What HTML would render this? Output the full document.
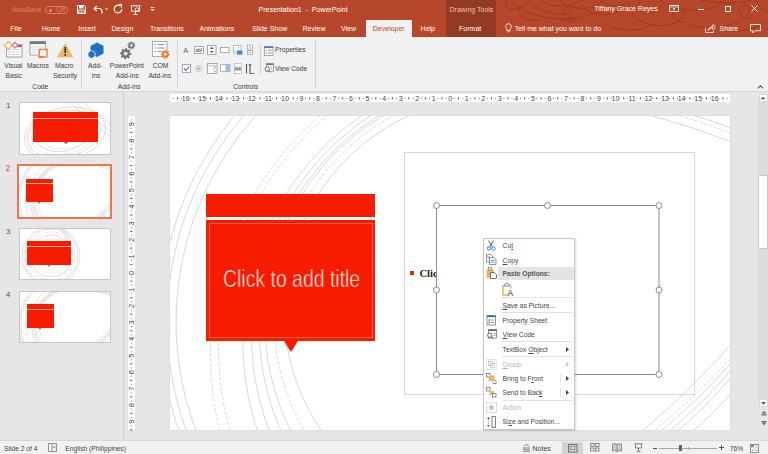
<!DOCTYPE html>
<html><head><meta charset="utf-8">
<style>
*{margin:0;padding:0;box-sizing:border-box}
html,body{width:768px;height:454px;overflow:hidden;background:#e6e6e6;font-family:"Liberation Sans",sans-serif;}
.a{position:absolute;white-space:nowrap}
.t{font-size:7px;line-height:8px;color:#fff}
.rb{font-size:6.7px;line-height:8px;color:#3c3c3c}
#title{left:0;top:0;width:768px;height:37px;background:#b7472a}
#ribbon{left:0;top:37px;width:768px;height:55px;background:#f1f1f1;border-bottom:1px solid #d6d6d6}
.sep{position:absolute;width:1px;background:#d4d4d4}
</style></head><body>
<!-- TITLE BAR -->
<div id="title" class="a">
  <div class="a" style="left:446px;top:0;width:50px;height:37px;background:#933a22"></div>
  <svg class="a" style="left:0;top:0" width="768" height="37" viewBox="0 0 768 37"><g fill="none" stroke="#983820" stroke-width="0.9"><path d="M507 0C503 6 508 11 516 9C526 7 530 2 528 0"/><path d="M512 2C520 12 540 18 562 19C580 20 596 14 606 6"/><path d="M530 0C534 8 548 16 566 14C574 13 572 6 566 8C558 11 566 24 572 22C578 20 572 16 568 18"/><path d="M540 0C548 6 560 8 574 4C580 2 582 0 584 0"/><path d="M560 0C566 8 586 12 600 4"/><path d="M586 10C596 16 612 16 622 10"/><path d="M520 6C516 16 526 22 540 20"/><path d="M632 14C640 24 660 30 676 22C690 15 684 6 676 10C668 14 676 24 686 22"/><path d="M660 0C670 10 700 14 716 6C722 3 722 0 720 0"/><path d="M690 24C704 30 730 28 744 18C754 10 750 2 742 6C734 10 742 20 752 18"/><path d="M700 0C716 4 740 4 752 0"/><path d="M720 30C740 34 760 28 768 20"/><path d="M610 26C620 32 640 32 652 24"/><path d="M600 0C606 6 620 8 630 2"/><path d="M640 0C636 8 644 14 654 12"/><path d="M756 0C760 8 766 12 768 12"/></g></svg>
  <div class="a t" style="left:12px;top:5.9px;color:#e0806a;font-size:6.8px">AutoSave</div>
  <div class="a" style="left:45px;top:6px;width:23px;height:8px;border:1px solid #d9806a;border-radius:4px"></div>
  <div class="a" style="left:48.5px;top:8.5px;width:3px;height:3px;background:#e3937f;border-radius:50%"></div>
  <div class="a t" style="left:56.3px;top:5.9px;color:#e0806a;font-size:6.8px">Off</div>
  <div class="a t" style="left:258.5px;top:5.6px">Presentation1&nbsp;&nbsp;-&nbsp;&nbsp;PowerPoint</div>
  <div class="a t" style="left:449.5px;top:5.9px;color:#eec3b6">Drawing Tools</div>
  <div class="a t" style="left:594.3px;top:4.9px">Tiffany Grace Reyes</div>
  <!-- QAT icons -->
  <svg class="a" style="left:76.5px;top:5px" width="9" height="9" viewBox="0 0 9 9">
    <path d="M0.5 0.5h6.8l1.2 1.2v6.8h-8z" fill="none" stroke="#fff" stroke-width="1"/>
    <rect x="2" y="0.8" width="4.5" height="2.6" fill="#fff"/>
    <rect x="1.8" y="5" width="5.4" height="3.2" fill="none" stroke="#fff" stroke-width="0.9"/>
    <rect x="3.6" y="6.3" width="1.2" height="1.4" fill="#fff"/>
  </svg>
  <svg class="a" style="left:93px;top:5px" width="16" height="9" viewBox="0 0 16 9">
    <path d="M1.5 3.5h4.5a3 3 0 0 1 3 3v2" fill="none" stroke="#fff" stroke-width="1.2"/>
    <path d="M3.8 1L1.2 3.5 3.8 6" fill="none" stroke="#fff" stroke-width="1.2"/>
    <path d="M12 3.5l1.5 1.6 1.5-1.6z" fill="#fff"/>
  </svg>
  <svg class="a" style="left:113px;top:4px" width="10" height="10" viewBox="0 0 10 10">
    <path d="M7.5 2.2A3.8 3.8 0 1 0 8.8 5" fill="none" stroke="#fff" stroke-width="1.2"/>
    <path d="M5.5 0.5h3v3" fill="none" stroke="#fff" stroke-width="1.1"/>
  </svg>
  <svg class="a" style="left:130px;top:5px" width="11" height="10" viewBox="0 0 11 10">
    <path d="M0.5 0.8h10M1.5 0.8v5.5h8v-5.5M5.5 6.3v3.2M3.5 9.5h4" fill="none" stroke="#fff" stroke-width="0.9"/>
    <circle cx="7" cy="4.5" r="1.8" fill="none" stroke="#fff" stroke-width="0.8"/>
  </svg>
  <svg class="a" style="left:150px;top:7px" width="5" height="5" viewBox="0 0 5 5">
    <path d="M0.5 0.5h4" stroke="#fff" stroke-width="0.8"/><path d="M0.5 2l2 2.2 2-2.2z" fill="#fff"/>
  </svg>
  <!-- window controls -->
  <svg class="a" style="left:669px;top:5px" width="10" height="7" viewBox="0 0 10 7">
    <rect x="0.5" y="0.5" width="9" height="6" fill="none" stroke="#fff" stroke-width="0.9"/>
    <path d="M0.5 2h9" stroke="#fff" stroke-width="0.7"/>
    <path d="M5 5.5v-2.3M3.8 4.3l1.2-1.2 1.2 1.2" stroke="#fff" stroke-width="0.8" fill="none"/>
  </svg>
  <div class="a" style="left:697.5px;top:8.5px;width:6px;height:1px;background:#fff"></div>
  <div class="a" style="left:724.5px;top:5.5px;width:6px;height:6px;border:1px solid #fff"></div>
  <svg class="a" style="left:751px;top:5px" width="7" height="7" viewBox="0 0 7 7"><path d="M0.5 0.5l6 6M6.5 0.5l-6 6" stroke="#fff" stroke-width="0.9"/></svg>
  <!-- tell me / share / comments -->
  <svg class="a" style="left:505px;top:23px" width="7" height="10" viewBox="0 0 7 10">
    <path d="M3.5 0.7a2.8 2.8 0 0 0-1.7 5v1.8h3.4v-1.8a2.8 2.8 0 0 0-1.7-5z" fill="none" stroke="#fff" stroke-width="0.8"/>
    <path d="M2.3 8.8h2.4" stroke="#fff" stroke-width="0.8"/>
  </svg>
  <svg class="a" style="left:705px;top:24px" width="11" height="9" viewBox="0 0 11 9">
    <path d="M0.5 3.5v5h8v-2" fill="none" stroke="#fff" stroke-width="0.8"/>
    <path d="M3 6.5q1-4 5-4v-2l2.5 2.5-2.5 2.5v-2q-3 0-5 3z" fill="none" stroke="#fff" stroke-width="0.8"/>
  </svg>
  <svg class="a" style="left:749.5px;top:23.5px" width="11" height="10" viewBox="0 0 11 10">
    <path d="M0.5 0.5h10v6.2h-5.5l-2.2 2.3v-2.3h-2.3z" fill="none" stroke="#fff" stroke-width="0.85"/>
  </svg>
  <!-- tabs -->
  <div class="a" style="left:366px;top:20px;width:46px;height:17px;background:#f1f1f1"></div>
  <div class="a t" style="left:10.3px;top:24.9px">File</div>
  <div class="a t" style="left:41.8px;top:24.9px">Home</div>
  <div class="a t" style="left:78.3px;top:24.9px">Insert</div>
  <div class="a t" style="left:111.5px;top:24.9px">Design</div>
  <div class="a t" style="left:149.9px;top:24.9px">Transitions</div>
  <div class="a t" style="left:199.5px;top:24.9px">Animations</div>
  <div class="a t" style="left:252.2px;top:24.9px">Slide Show</div>
  <div class="a t" style="left:302.5px;top:24.9px">Review</div>
  <div class="a t" style="left:340.9px;top:24.9px">View</div>
  <div class="a t" style="left:372.8px;top:24.9px;color:#b7472a">Developer</div>
  <div class="a t" style="left:420.6px;top:24.9px">Help</div>
  <div class="a t" style="left:459.1px;top:24.9px">Format</div>
  <div class="a t" style="left:514.7px;top:24.9px">Tell me what you want to do</div>
  <div class="a t" style="left:719.5px;top:24.9px">Share</div>
</div>
<!-- RIBBON -->
<div id="ribbon" class="a">
  <!-- Code group -->
  <svg class="a" style="left:3px;top:4px" width="20" height="17" viewBox="0 0 20 17">
    <rect x="3.5" y="3.5" width="15.5" height="12.5" fill="#fff" stroke="#9a9a9a" stroke-width="0.9"/>
    <rect x="14" y="4" width="4.5" height="2.2" fill="#777"/>
    <path d="M5 8.5h12.5M5 11h12.5M5 13.5h12.5" stroke="#c4c4c4" stroke-width="0.8" stroke-dasharray="3 0.8"/>
    <path d="M5.3 0.6L9.2 4.5 5.3 8.4 1.4 4.5Z" fill="#fff" stroke="#e6bf6e" stroke-width="1.5"/>
    <path d="M12 1.4L14.8 4.2 12 7 9.2 4.2Z" fill="#fff" stroke="#e57a9a" stroke-width="1.3"/>
  </svg>
  <svg class="a" style="left:29px;top:4px" width="20" height="18" viewBox="0 0 20 18">
    <rect x="1" y="0.5" width="15.5" height="13.5" fill="#fff" stroke="#9a9a9a" stroke-width="0.9"/>
    <rect x="1" y="0.5" width="15.5" height="2.6" fill="#777"/>
    <path d="M2.5 6h12.5M2.5 8.5h12.5M2.5 11h12.5" stroke="#c4c4c4" stroke-width="0.8" stroke-dasharray="3.5 0.8"/>
    <path d="M10.5 8.5h7.5v7q-1 1-2 0.5h-6z" fill="#fff" stroke="#ee7d2f" stroke-width="1.3"/>
    <path d="M9.5 15.8h5" stroke="#ee7d2f" stroke-width="1.8"/>
    <path d="M17.5 8.2q1.2 0 1.2 1.2" stroke="#ee7d2f" stroke-width="1" fill="none"/>
  </svg>
  <svg class="a" style="left:56.5px;top:6px" width="17" height="15" viewBox="0 0 17 15">
    <path d="M8.25 0.3 L16.4 14.2 H0.1Z" fill="#e9b766"/>
    <rect x="7.35" y="4" width="1.8" height="6" fill="#3a3a3a"/>
    <rect x="7.35" y="11" width="1.8" height="1.8" fill="#3a3a3a"/>
  </svg>
  <div class="a rb" style="left:4.3px;top:25.4px">Visual</div>
  <div class="a rb" style="left:5.5px;top:35.4px">Basic</div>
  <div class="a rb" style="left:27px;top:25.4px">Macros</div>
  <div class="a rb" style="left:55px;top:25.4px">Macro</div>
  <div class="a rb" style="left:53px;top:35.4px">Security</div>
  <div class="a rb" style="left:32.3px;top:46.4px">Code</div>
  <div class="sep" style="left:81px;top:3px;height:48px"></div>
  <!-- Add-ins group -->
  <svg class="a" style="left:87px;top:5px" width="18" height="17" viewBox="0 0 18 17">
    <path d="M10 0.5 L16.5 4 V11.5 L10 15 L3.5 11.5 V4Z" fill="#1f6fc5"/>
    <path d="M4.5 8.5 L8 10.5 V14.5 L4.5 16.5 L1 14.5 V10.5Z" fill="#1f6fc5" stroke="#f1f1f1" stroke-width="0.8"/>
  </svg>
  <svg class="a" style="left:119px;top:4px" width="18" height="19" viewBox="0 0 18 19"><polygon points="12.40,12.60 12.29,13.73 10.57,14.25 10.18,14.99 10.70,16.70 9.82,17.42 8.25,16.57 7.44,16.82 6.60,18.40 5.47,18.29 4.95,16.57 4.21,16.18 2.50,16.70 1.78,15.82 2.63,14.25 2.38,13.44 0.80,12.60 0.91,11.47 2.63,10.95 3.02,10.21 2.50,8.50 3.38,7.78 4.95,8.63 5.76,8.38 6.60,6.80 7.73,6.91 8.25,8.63 8.99,9.02 10.70,8.50 11.42,9.38 10.57,10.95 10.82,11.76" fill="#767676"/><circle cx="6.6" cy="12.6" r="1.9" fill="#f1f1f1"/><polygon points="16.40,4.40 16.32,5.18 15.17,5.55 14.89,6.07 15.23,7.23 14.62,7.73 13.55,7.17 12.99,7.34 12.40,8.40 11.62,8.32 11.25,7.17 10.73,6.89 9.57,7.23 9.07,6.62 9.63,5.55 9.46,4.99 8.40,4.40 8.48,3.62 9.63,3.25 9.91,2.73 9.57,1.57 10.18,1.07 11.25,1.63 11.81,1.46 12.40,0.40 13.18,0.48 13.55,1.63 14.07,1.91 15.23,1.57 15.73,2.18 15.17,3.25 15.34,3.81" fill="#767676"/><circle cx="12.4" cy="4.4" r="1.3" fill="#f1f1f1"/></svg>
  <svg class="a" style="left:152px;top:4px" width="19" height="19" viewBox="0 0 19 19">
    <rect x="0.5" y="0.5" width="14.5" height="15" fill="#fff" stroke="#999" stroke-width="0.8"/>
    <circle cx="3" cy="3.5" r="0.7" fill="#777"/>
    <path d="M2.2 6.8l0.8 0.8 1.3-1.6M2.2 10.3l0.8 0.8 1.3-1.6" stroke="#777" stroke-width="0.6" fill="none"/>
    <path d="M5.5 3.5h7M5.5 7h7M5.5 10.5h4" stroke="#777" stroke-width="0.8"/>
    <polygon points="17.90,13.30 17.81,14.20 16.44,14.60 16.13,15.19 16.55,16.55 15.86,17.12 14.60,16.44 13.96,16.63 13.30,17.90 12.40,17.81 12.00,16.44 11.41,16.13 10.05,16.55 9.48,15.86 10.16,14.60 9.97,13.96 8.70,13.30 8.79,12.40 10.16,12.00 10.47,11.41 10.05,10.05 10.74,9.48 12.00,10.16 12.64,9.97 13.30,8.70 14.20,8.79 14.60,10.16 15.19,10.47 16.55,10.05 17.12,10.74 16.44,12.00 16.63,12.64" fill="#ed7d31"/><circle cx="13.3" cy="13.3" r="1.4" fill="#fff"/>
  </svg>
  <div class="a rb" style="left:88px;top:25.4px">Add-</div>
  <div class="a rb" style="left:91.7px;top:35.4px">ins</div>
  <div class="a rb" style="left:109.7px;top:25.4px">PowerPoint</div>
  <div class="a rb" style="left:115.8px;top:35.4px">Add-ins</div>
  <div class="a rb" style="left:152.7px;top:25.4px">COM</div>
  <div class="a rb" style="left:148.4px;top:35.4px">Add-ins</div>
  <div class="a rb" style="left:117.8px;top:46.4px">Add-ins</div>
  <div class="sep" style="left:177px;top:3px;height:48px"></div>
  <!-- Controls group -->
  <svg class="a" style="left:180px;top:7px" width="78" height="30" viewBox="0 0 78 30">
    <text x="3.3" y="9.3" font-family="Liberation Sans" font-size="7.5" fill="#666">A</text>
    <rect x="14.5" y="2.5" width="9" height="7" fill="#fff" stroke="#999" stroke-width="0.8"/>
    <text x="15.4" y="8.2" font-family="Liberation Sans" font-size="4.6" font-weight="bold" fill="#666">abl</text>
    <rect x="27.5" y="1.5" width="8.5" height="9" fill="#fff" stroke="#999" stroke-width="0.8"/>
    <path d="M31.7 2.8l-2 2.2h4zM31.7 9.2l-2-2.2h4z" fill="#666"/>
    <rect x="40.5" y="3.5" width="8.5" height="5" fill="#fff" stroke="#999" stroke-width="0.8"/>
    <rect x="53.5" y="1.5" width="7.5" height="7.5" fill="#fff" stroke="#aaa" stroke-width="0.8"/>
    <circle cx="58.5" cy="3.5" r="0.8" fill="#e9b766"/>
    <path d="M54.5 8l2-2 2 2" stroke="#7aa7d8" stroke-width="0.7" fill="none"/>
    <rect x="57" y="6.5" width="5.5" height="4" rx="0.5" fill="#3f88d4"/>
    <rect x="67.5" y="1" width="5" height="4" fill="#fff" stroke="#999" stroke-width="0.7"/>
    <rect x="67.5" y="6.5" width="5" height="4" fill="#fff" stroke="#999" stroke-width="0.7"/>
    <path d="M70 2.2l-1 1.3h2zM70 9.3l-1-1.3h2z" fill="#666"/>
    <rect x="2.5" y="20.5" width="8" height="8" fill="#fff" stroke="#999" stroke-width="0.8"/>
    <path d="M4 24.5l2 2 3.3-4" stroke="#2a72c8" stroke-width="1.1" fill="none"/>
    <circle cx="18.7" cy="24.6" r="2.7" fill="#fff" stroke="#999" stroke-width="0.7"/>
    <circle cx="18.7" cy="24.6" r="1" fill="#777"/>
    <rect x="27.5" y="19.5" width="9.5" height="10" fill="#fff" stroke="#999" stroke-width="0.8"/>
    <path d="M27.5 21.8h9.5M34 21.8v7.5" stroke="#aaa" stroke-width="0.7"/>
    <path d="M35.5 23l-0.8 1h1.6zM35.5 28l-0.8-1h1.6z" fill="#777"/>
    <rect x="40.5" y="20.5" width="9.5" height="7" fill="#fff" stroke="#aaa" stroke-width="0.8"/>
    <rect x="46" y="21" width="3.5" height="6" fill="#b8d3ee" stroke="#6fa0d8" stroke-width="0.5"/>
    <circle cx="47.7" cy="23" r="0.5" fill="#555"/><circle cx="47.7" cy="25" r="0.5" fill="#555"/>
    <rect x="54.5" y="19.5" width="7" height="3.5" fill="#fff" stroke="#aaa" stroke-width="0.6"/>
    <rect x="54.5" y="23.5" width="7" height="2.5" fill="#999"/>
    <rect x="54.5" y="26.5" width="7" height="3" fill="#fff" stroke="#aaa" stroke-width="0.6"/>
    <path d="M66.5 20v9.5M70 20v9.5" stroke="#555" stroke-width="1.1" fill="none"/>
    <path d="M68.8 20l1.2 1.8 1.2-1.8M70 29.5h4.5" stroke="#555" stroke-width="0.8" fill="none"/>
  </svg>
  <div class="sep" style="left:259.5px;top:7px;height:31px"></div>
  <svg class="a" style="left:263.5px;top:8.5px" width="10" height="10" viewBox="0 0 10 10">
    <rect x="0.5" y="0.5" width="8.5" height="9" fill="#fff" stroke="#999" stroke-width="0.8"/>
    <rect x="0.5" y="0.5" width="8.5" height="1.4" fill="#2a72c8"/>
    <path d="M2 4.2h1M2 7h1M4 4.2h3.8M4 7h3.8" stroke="#777" stroke-width="0.8"/>
  </svg>
  <svg class="a" style="left:263.5px;top:26px" width="10" height="10" viewBox="0 0 10 10">
    <rect x="2.5" y="0.5" width="7" height="8" fill="#fff" stroke="#999" stroke-width="0.8"/>
    <rect x="2.5" y="0.5" width="7" height="1.6" fill="#777"/>
    <path d="M6.5 4h2M6.5 6h2" stroke="#888" stroke-width="0.7"/>
    <circle cx="3.3" cy="6" r="2.2" fill="#f1f1f1" stroke="#666" stroke-width="0.9"/>
    <path d="M4.8 7.6l1.8 1.9" stroke="#666" stroke-width="1"/>
  </svg>
  <div class="a rb" style="left:275px;top:9.0px">Properties</div>
  <div class="a rb" style="left:275px;top:27.6px">View Code</div>
  <div class="a rb" style="left:233.2px;top:46.4px">Controls</div>
  <div class="sep" style="left:314.5px;top:3px;height:48px"></div>
  <svg class="a" style="left:756.5px;top:47.5px" width="7" height="4" viewBox="0 0 7 4"><path d="M0.8 3.4L3.5 0.8l2.7 2.6" stroke="#555" stroke-width="1.1" fill="none"/></svg>
</div>

<!-- LEFT PANE -->
<div class="a" style="left:123px;top:92px;width:1px;height:348px;background:#d2d2d2"></div>
<div class="a" style="left:6px;top:101px;font-size:8px;line-height:9px;color:#555">1</div>
<div class="a" style="left:5.5px;top:164px;font-size:8.5px;line-height:9px;color:#d35230">2</div>
<div class="a" style="left:6px;top:227px;font-size:8px;line-height:9px;color:#555">3</div>
<div class="a" style="left:6px;top:290px;font-size:8px;line-height:9px;color:#555">4</div>

<div class="a" style="left:18.5px;top:101.5px;width:92px;height:53px;background:#fff;border:1px solid #c6c6c6;overflow:hidden">
  <svg class="a" style="left:0;top:0" width="90" height="51" viewBox="0 0 90 51"><g fill="none" stroke="#c4c4c4" stroke-width="0.55">
    <ellipse cx="44" cy="31" rx="28" ry="17" transform="rotate(-12 44 31)"/>
    <ellipse cx="44" cy="31" rx="33" ry="20" transform="rotate(-12 44 31)" stroke-dasharray="1.5 1"/>
    <ellipse cx="44" cy="31" rx="37" ry="23" transform="rotate(-12 44 31)"/>
    <ellipse cx="45" cy="31" rx="41" ry="26" transform="rotate(-12 44 31)"/>
    <ellipse cx="46" cy="32" rx="24" ry="14" transform="rotate(-12 44 31)" stroke-dasharray="1.5 1"/>
    <path d="M50 0l40 34M56 0l34 28M64 0l26 21" />
  </g></svg>
  <div class="a" style="left:13px;top:9.5px;width:65.5px;height:30px;background:#f71c00"></div>
  <div class="a" style="left:13px;top:15px;width:65.5px;height:1px;background:#f6b0a4"></div>
  <div class="a" style="left:44px;top:39.5px;width:0;height:0;border-left:2px solid transparent;border-right:2px solid transparent;border-top:2px solid #f71c00"></div>
</div>
<div class="a" style="left:17px;top:164px;width:95px;height:55px;background:#fff;border:2px solid #ea7552;overflow:hidden">
  <svg class="a" style="left:0;top:0" width="91" height="51" viewBox="0 0 560 315" preserveAspectRatio="none"><g fill="none" stroke="#c8c8c8" stroke-width="3" vector-effect="none"><path d="M78.4 -16.0 A323.0 323.0 0 0 0 14.3 329.0"/><path d="M88.1 -16.0 A316.0 316.0 0 0 0 21.9 329.0"/><path d="M101.0 -16.0 A307.0 307.0 0 0 0 31.7 329.0"/><path d="M169.8 -16.0 A315.3 315.3 0 0 0 53.7 329.0" stroke-dasharray="3 2"/><path d="M177.7 -16.0 A303.2 303.2 0 0 0 64.4 329.0" stroke-dasharray="3 2"/><path d="M216.8 -16.0 A275.0 275.0 0 0 0 92.8 329.0"/><path d="M228.1 -16.0 A262.4 262.4 0 0 0 105.3 329.0"/><path d="M238.9 -16.0 A250.3 250.3 0 0 0 117.8 329.0"/><path d="M244.9 -16.0 A240.6 240.6 0 0 0 128.4 329.0"/><path d="M259.9 -16.0 A228.0 228.0 0 0 0 143.3 329.0" stroke-dasharray="3 2"/><path d="M289.3 -16.0 A213.5 213.5 0 0 0 162.1 329.0"/><path d="M473.0 -3.0 Q522.5 10.5 570.0 29.0"/><path d="M500.7 -3.0 Q536.4 6.8 570.0 21.6" stroke-dasharray="3 2"/><path d="M513.6 -3.0 Q542.8 3.8 570.0 15.7"/><path d="M462.8 323.0 Q519.4 276.4 568.0 220.7"/><path d="M473.8 323.0 Q524.9 283.0 568.0 234.0" stroke-dasharray="3 2"/><path d="M481.0 323.0 Q528.5 285.5 568.0 239.0"/><path d="M489.7 323.0 Q532.9 289.1 568.0 246.3"/><path d="M498.2 323.0 Q537.1 292.2 568.0 252.5"/><path d="M511.7 323.0 Q543.9 300.1 568.0 268.3"/></g></svg>
  <div class="a" style="left:6.5px;top:12.5px;width:27.5px;height:23.5px;background:#f71c00"></div>
  <div class="a" style="left:6.5px;top:16.5px;width:27.5px;height:1px;background:#f6b0a4"></div>
  <div class="a" style="left:19px;top:36px;width:0;height:0;border-left:1.5px solid transparent;border-right:1.5px solid transparent;border-top:2px solid #f71c00"></div>
</div>
<div class="a" style="left:18.5px;top:227.5px;width:92px;height:52px;background:#fff;border:1px solid #c6c6c6;overflow:hidden">
  <svg class="a" style="left:0;top:0" width="90" height="50" viewBox="0 0 90 50"><g fill="none" stroke="#c4c4c4" stroke-width="0.55">
    <circle cx="31" cy="27" r="21"/><circle cx="31" cy="27" r="24" stroke-dasharray="1.5 1"/><circle cx="31" cy="27" r="27"/><circle cx="31" cy="27" r="29"/>
    <circle cx="31" cy="27" r="17" stroke-dasharray="1.5 1"/>
    <path d="M40 0q5 3 6 12M43 0q5 3 6 12"/>
  </g></svg>
  <div class="a" style="left:7px;top:12.5px;width:44px;height:23.5px;background:#f71c00"></div>
  <div class="a" style="left:7px;top:17px;width:44px;height:1px;background:#f6b0a4"></div>
  <div class="a" style="left:28px;top:36px;width:0;height:0;border-left:1.5px solid transparent;border-right:1.5px solid transparent;border-top:2px solid #f71c00"></div>
</div>
<div class="a" style="left:18.5px;top:290.5px;width:92px;height:52px;background:#fff;border:1px solid #c6c6c6;overflow:hidden">
  <svg class="a" style="left:0;top:0" width="90" height="50" viewBox="0 0 560 315" preserveAspectRatio="none"><g fill="none" stroke="#c8c8c8" stroke-width="3" vector-effect="none"><path d="M78.4 -16.0 A323.0 323.0 0 0 0 14.3 329.0"/><path d="M88.1 -16.0 A316.0 316.0 0 0 0 21.9 329.0"/><path d="M101.0 -16.0 A307.0 307.0 0 0 0 31.7 329.0"/><path d="M169.8 -16.0 A315.3 315.3 0 0 0 53.7 329.0" stroke-dasharray="3 2"/><path d="M177.7 -16.0 A303.2 303.2 0 0 0 64.4 329.0" stroke-dasharray="3 2"/><path d="M216.8 -16.0 A275.0 275.0 0 0 0 92.8 329.0"/><path d="M228.1 -16.0 A262.4 262.4 0 0 0 105.3 329.0"/><path d="M238.9 -16.0 A250.3 250.3 0 0 0 117.8 329.0"/><path d="M244.9 -16.0 A240.6 240.6 0 0 0 128.4 329.0"/><path d="M259.9 -16.0 A228.0 228.0 0 0 0 143.3 329.0" stroke-dasharray="3 2"/><path d="M289.3 -16.0 A213.5 213.5 0 0 0 162.1 329.0"/><path d="M473.0 -3.0 Q522.5 10.5 570.0 29.0"/><path d="M500.7 -3.0 Q536.4 6.8 570.0 21.6" stroke-dasharray="3 2"/><path d="M513.6 -3.0 Q542.8 3.8 570.0 15.7"/><path d="M462.8 323.0 Q519.4 276.4 568.0 220.7"/><path d="M473.8 323.0 Q524.9 283.0 568.0 234.0" stroke-dasharray="3 2"/><path d="M481.0 323.0 Q528.5 285.5 568.0 239.0"/><path d="M489.7 323.0 Q532.9 289.1 568.0 246.3"/><path d="M498.2 323.0 Q537.1 292.2 568.0 252.5"/><path d="M511.7 323.0 Q543.9 300.1 568.0 268.3"/></g></svg>
  <div class="a" style="left:7px;top:12.5px;width:27px;height:23.5px;background:#f71c00"></div>
  <div class="a" style="left:7px;top:17px;width:27px;height:1px;background:#f6b0a4"></div>
  <div class="a" style="left:19px;top:36px;width:0;height:0;border-left:1.5px solid transparent;border-right:1.5px solid transparent;border-top:2px solid #f71c00"></div>
</div>

<!-- RULERS -->
<div class="a" style="left:170px;top:94px;width:560px;height:8px;background:#fff"></div>
<svg class="a" style="left:170px;top:94.5px" width="560" height="7" viewBox="0 0 560 7" id="hr"><text x="15.72" y="6" text-anchor="middle" font-family="Liberation Sans" font-size="7" fill="#444">16</text><text x="32.25" y="6" text-anchor="middle" font-family="Liberation Sans" font-size="7" fill="#444">15</text><text x="48.78" y="6" text-anchor="middle" font-family="Liberation Sans" font-size="7" fill="#444">14</text><text x="65.31" y="6" text-anchor="middle" font-family="Liberation Sans" font-size="7" fill="#444">13</text><text x="81.84" y="6" text-anchor="middle" font-family="Liberation Sans" font-size="7" fill="#444">12</text><text x="98.37" y="6" text-anchor="middle" font-family="Liberation Sans" font-size="7" fill="#444">11</text><text x="114.90" y="6" text-anchor="middle" font-family="Liberation Sans" font-size="7" fill="#444">10</text><text x="131.43" y="6" text-anchor="middle" font-family="Liberation Sans" font-size="7" fill="#444">9</text><text x="147.96" y="6" text-anchor="middle" font-family="Liberation Sans" font-size="7" fill="#444">8</text><text x="164.49" y="6" text-anchor="middle" font-family="Liberation Sans" font-size="7" fill="#444">7</text><text x="181.02" y="6" text-anchor="middle" font-family="Liberation Sans" font-size="7" fill="#444">6</text><text x="197.55" y="6" text-anchor="middle" font-family="Liberation Sans" font-size="7" fill="#444">5</text><text x="214.08" y="6" text-anchor="middle" font-family="Liberation Sans" font-size="7" fill="#444">4</text><text x="230.61" y="6" text-anchor="middle" font-family="Liberation Sans" font-size="7" fill="#444">3</text><text x="247.14" y="6" text-anchor="middle" font-family="Liberation Sans" font-size="7" fill="#444">2</text><text x="263.67" y="6" text-anchor="middle" font-family="Liberation Sans" font-size="7" fill="#444">1</text><text x="280.20" y="6" text-anchor="middle" font-family="Liberation Sans" font-size="7" fill="#444">0</text><text x="296.73" y="6" text-anchor="middle" font-family="Liberation Sans" font-size="7" fill="#444">1</text><text x="313.26" y="6" text-anchor="middle" font-family="Liberation Sans" font-size="7" fill="#444">2</text><text x="329.79" y="6" text-anchor="middle" font-family="Liberation Sans" font-size="7" fill="#444">3</text><text x="346.32" y="6" text-anchor="middle" font-family="Liberation Sans" font-size="7" fill="#444">4</text><text x="362.85" y="6" text-anchor="middle" font-family="Liberation Sans" font-size="7" fill="#444">5</text><text x="379.38" y="6" text-anchor="middle" font-family="Liberation Sans" font-size="7" fill="#444">6</text><text x="395.91" y="6" text-anchor="middle" font-family="Liberation Sans" font-size="7" fill="#444">7</text><text x="412.44" y="6" text-anchor="middle" font-family="Liberation Sans" font-size="7" fill="#444">8</text><text x="428.97" y="6" text-anchor="middle" font-family="Liberation Sans" font-size="7" fill="#444">9</text><text x="445.50" y="6" text-anchor="middle" font-family="Liberation Sans" font-size="7" fill="#444">10</text><text x="462.03" y="6" text-anchor="middle" font-family="Liberation Sans" font-size="7" fill="#444">11</text><text x="478.56" y="6" text-anchor="middle" font-family="Liberation Sans" font-size="7" fill="#444">12</text><text x="495.09" y="6" text-anchor="middle" font-family="Liberation Sans" font-size="7" fill="#444">13</text><text x="511.62" y="6" text-anchor="middle" font-family="Liberation Sans" font-size="7" fill="#444">14</text><text x="528.15" y="6" text-anchor="middle" font-family="Liberation Sans" font-size="7" fill="#444">15</text><text x="544.68" y="6" text-anchor="middle" font-family="Liberation Sans" font-size="7" fill="#444">16</text><rect x="2.82" y="3" width="1" height="1" fill="#888"/><rect x="6.95" y="2" width="1" height="2.5" fill="#666"/><rect x="11.09" y="3" width="1" height="1" fill="#888"/><rect x="19.35" y="3" width="1" height="1" fill="#888"/><rect x="23.48" y="2" width="1" height="2.5" fill="#666"/><rect x="27.62" y="3" width="1" height="1" fill="#888"/><rect x="35.88" y="3" width="1" height="1" fill="#888"/><rect x="40.01" y="2" width="1" height="2.5" fill="#666"/><rect x="44.15" y="3" width="1" height="1" fill="#888"/><rect x="52.41" y="3" width="1" height="1" fill="#888"/><rect x="56.54" y="2" width="1" height="2.5" fill="#666"/><rect x="60.68" y="3" width="1" height="1" fill="#888"/><rect x="68.94" y="3" width="1" height="1" fill="#888"/><rect x="73.07" y="2" width="1" height="2.5" fill="#666"/><rect x="77.21" y="3" width="1" height="1" fill="#888"/><rect x="85.47" y="3" width="1" height="1" fill="#888"/><rect x="89.60" y="2" width="1" height="2.5" fill="#666"/><rect x="93.74" y="3" width="1" height="1" fill="#888"/><rect x="102.00" y="3" width="1" height="1" fill="#888"/><rect x="106.13" y="2" width="1" height="2.5" fill="#666"/><rect x="110.27" y="3" width="1" height="1" fill="#888"/><rect x="118.53" y="3" width="1" height="1" fill="#888"/><rect x="122.66" y="2" width="1" height="2.5" fill="#666"/><rect x="126.80" y="3" width="1" height="1" fill="#888"/><rect x="135.06" y="3" width="1" height="1" fill="#888"/><rect x="139.19" y="2" width="1" height="2.5" fill="#666"/><rect x="143.33" y="3" width="1" height="1" fill="#888"/><rect x="151.59" y="3" width="1" height="1" fill="#888"/><rect x="155.72" y="2" width="1" height="2.5" fill="#666"/><rect x="159.86" y="3" width="1" height="1" fill="#888"/><rect x="168.12" y="3" width="1" height="1" fill="#888"/><rect x="172.25" y="2" width="1" height="2.5" fill="#666"/><rect x="176.39" y="3" width="1" height="1" fill="#888"/><rect x="184.65" y="3" width="1" height="1" fill="#888"/><rect x="188.78" y="2" width="1" height="2.5" fill="#666"/><rect x="192.92" y="3" width="1" height="1" fill="#888"/><rect x="201.18" y="3" width="1" height="1" fill="#888"/><rect x="205.31" y="2" width="1" height="2.5" fill="#666"/><rect x="209.45" y="3" width="1" height="1" fill="#888"/><rect x="217.71" y="3" width="1" height="1" fill="#888"/><rect x="221.84" y="2" width="1" height="2.5" fill="#666"/><rect x="225.98" y="3" width="1" height="1" fill="#888"/><rect x="234.24" y="3" width="1" height="1" fill="#888"/><rect x="238.38" y="2" width="1" height="2.5" fill="#666"/><rect x="242.51" y="3" width="1" height="1" fill="#888"/><rect x="250.77" y="3" width="1" height="1" fill="#888"/><rect x="254.90" y="2" width="1" height="2.5" fill="#666"/><rect x="259.04" y="3" width="1" height="1" fill="#888"/><rect x="267.30" y="3" width="1" height="1" fill="#888"/><rect x="271.44" y="2" width="1" height="2.5" fill="#666"/><rect x="275.57" y="3" width="1" height="1" fill="#888"/><rect x="283.83" y="3" width="1" height="1" fill="#888"/><rect x="287.96" y="2" width="1" height="2.5" fill="#666"/><rect x="292.10" y="3" width="1" height="1" fill="#888"/><rect x="300.36" y="3" width="1" height="1" fill="#888"/><rect x="304.50" y="2" width="1" height="2.5" fill="#666"/><rect x="308.63" y="3" width="1" height="1" fill="#888"/><rect x="316.89" y="3" width="1" height="1" fill="#888"/><rect x="321.02" y="2" width="1" height="2.5" fill="#666"/><rect x="325.16" y="3" width="1" height="1" fill="#888"/><rect x="333.42" y="3" width="1" height="1" fill="#888"/><rect x="337.56" y="2" width="1" height="2.5" fill="#666"/><rect x="341.69" y="3" width="1" height="1" fill="#888"/><rect x="349.95" y="3" width="1" height="1" fill="#888"/><rect x="354.08" y="2" width="1" height="2.5" fill="#666"/><rect x="358.22" y="3" width="1" height="1" fill="#888"/><rect x="366.48" y="3" width="1" height="1" fill="#888"/><rect x="370.62" y="2" width="1" height="2.5" fill="#666"/><rect x="374.75" y="3" width="1" height="1" fill="#888"/><rect x="383.01" y="3" width="1" height="1" fill="#888"/><rect x="387.14" y="2" width="1" height="2.5" fill="#666"/><rect x="391.28" y="3" width="1" height="1" fill="#888"/><rect x="399.54" y="3" width="1" height="1" fill="#888"/><rect x="403.68" y="2" width="1" height="2.5" fill="#666"/><rect x="407.81" y="3" width="1" height="1" fill="#888"/><rect x="416.07" y="3" width="1" height="1" fill="#888"/><rect x="420.20" y="2" width="1" height="2.5" fill="#666"/><rect x="424.34" y="3" width="1" height="1" fill="#888"/><rect x="432.60" y="3" width="1" height="1" fill="#888"/><rect x="436.74" y="2" width="1" height="2.5" fill="#666"/><rect x="440.87" y="3" width="1" height="1" fill="#888"/><rect x="449.13" y="3" width="1" height="1" fill="#888"/><rect x="453.26" y="2" width="1" height="2.5" fill="#666"/><rect x="457.40" y="3" width="1" height="1" fill="#888"/><rect x="465.66" y="3" width="1" height="1" fill="#888"/><rect x="469.80" y="2" width="1" height="2.5" fill="#666"/><rect x="473.93" y="3" width="1" height="1" fill="#888"/><rect x="482.19" y="3" width="1" height="1" fill="#888"/><rect x="486.32" y="2" width="1" height="2.5" fill="#666"/><rect x="490.46" y="3" width="1" height="1" fill="#888"/><rect x="498.72" y="3" width="1" height="1" fill="#888"/><rect x="502.86" y="2" width="1" height="2.5" fill="#666"/><rect x="506.99" y="3" width="1" height="1" fill="#888"/><rect x="515.25" y="3" width="1" height="1" fill="#888"/><rect x="519.38" y="2" width="1" height="2.5" fill="#666"/><rect x="523.52" y="3" width="1" height="1" fill="#888"/><rect x="531.78" y="3" width="1" height="1" fill="#888"/><rect x="535.91" y="2" width="1" height="2.5" fill="#666"/><rect x="540.05" y="3" width="1" height="1" fill="#888"/><rect x="548.31" y="3" width="1" height="1" fill="#888"/><rect x="552.44" y="2" width="1" height="2.5" fill="#666"/><rect x="556.58" y="3" width="1" height="1" fill="#888"/></svg>
<div class="a" style="left:128px;top:116px;width:7px;height:313.5px;background:#fff"></div>
<svg class="a" style="left:128px;top:116px" width="7" height="315" viewBox="0 0 7 315" id="vr"><text transform="translate(6.2 8.13) rotate(-90)" text-anchor="middle" font-family="Liberation Sans" font-size="7.5" fill="#3a3a3a">9</text><text transform="translate(6.2 24.66) rotate(-90)" text-anchor="middle" font-family="Liberation Sans" font-size="7.5" fill="#3a3a3a">8</text><text transform="translate(6.2 41.19) rotate(-90)" text-anchor="middle" font-family="Liberation Sans" font-size="7.5" fill="#3a3a3a">7</text><text transform="translate(6.2 57.72) rotate(-90)" text-anchor="middle" font-family="Liberation Sans" font-size="7.5" fill="#3a3a3a">6</text><text transform="translate(6.2 74.25) rotate(-90)" text-anchor="middle" font-family="Liberation Sans" font-size="7.5" fill="#3a3a3a">5</text><text transform="translate(6.2 90.78) rotate(-90)" text-anchor="middle" font-family="Liberation Sans" font-size="7.5" fill="#3a3a3a">4</text><text transform="translate(6.2 107.31) rotate(-90)" text-anchor="middle" font-family="Liberation Sans" font-size="7.5" fill="#3a3a3a">3</text><text transform="translate(6.2 123.84) rotate(-90)" text-anchor="middle" font-family="Liberation Sans" font-size="7.5" fill="#3a3a3a">2</text><text transform="translate(6.2 140.37) rotate(-90)" text-anchor="middle" font-family="Liberation Sans" font-size="7.5" fill="#3a3a3a">1</text><text transform="translate(6.2 156.90) rotate(-90)" text-anchor="middle" font-family="Liberation Sans" font-size="7.5" fill="#3a3a3a">0</text><text transform="translate(6.2 173.43) rotate(-90)" text-anchor="middle" font-family="Liberation Sans" font-size="7.5" fill="#3a3a3a">1</text><text transform="translate(6.2 189.96) rotate(-90)" text-anchor="middle" font-family="Liberation Sans" font-size="7.5" fill="#3a3a3a">2</text><text transform="translate(6.2 206.49) rotate(-90)" text-anchor="middle" font-family="Liberation Sans" font-size="7.5" fill="#3a3a3a">3</text><text transform="translate(6.2 223.02) rotate(-90)" text-anchor="middle" font-family="Liberation Sans" font-size="7.5" fill="#3a3a3a">4</text><text transform="translate(6.2 239.55) rotate(-90)" text-anchor="middle" font-family="Liberation Sans" font-size="7.5" fill="#3a3a3a">5</text><text transform="translate(6.2 256.08) rotate(-90)" text-anchor="middle" font-family="Liberation Sans" font-size="7.5" fill="#3a3a3a">6</text><text transform="translate(6.2 272.61) rotate(-90)" text-anchor="middle" font-family="Liberation Sans" font-size="7.5" fill="#3a3a3a">7</text><text transform="translate(6.2 289.14) rotate(-90)" text-anchor="middle" font-family="Liberation Sans" font-size="7.5" fill="#3a3a3a">8</text><text transform="translate(6.2 305.67) rotate(-90)" text-anchor="middle" font-family="Liberation Sans" font-size="7.5" fill="#3a3a3a">9</text><rect x="3" y="3.50" width="1" height="1" fill="#888"/><rect x="3" y="11.76" width="1" height="1" fill="#888"/><rect x="2" y="15.89" width="2.5" height="1" fill="#666"/><rect x="3" y="20.03" width="1" height="1" fill="#888"/><rect x="3" y="28.29" width="1" height="1" fill="#888"/><rect x="2" y="32.42" width="2.5" height="1" fill="#666"/><rect x="3" y="36.56" width="1" height="1" fill="#888"/><rect x="3" y="44.82" width="1" height="1" fill="#888"/><rect x="2" y="48.95" width="2.5" height="1" fill="#666"/><rect x="3" y="53.09" width="1" height="1" fill="#888"/><rect x="3" y="61.35" width="1" height="1" fill="#888"/><rect x="2" y="65.48" width="2.5" height="1" fill="#666"/><rect x="3" y="69.62" width="1" height="1" fill="#888"/><rect x="3" y="77.88" width="1" height="1" fill="#888"/><rect x="2" y="82.01" width="2.5" height="1" fill="#666"/><rect x="3" y="86.15" width="1" height="1" fill="#888"/><rect x="3" y="94.41" width="1" height="1" fill="#888"/><rect x="2" y="98.54" width="2.5" height="1" fill="#666"/><rect x="3" y="102.68" width="1" height="1" fill="#888"/><rect x="3" y="110.94" width="1" height="1" fill="#888"/><rect x="2" y="115.07" width="2.5" height="1" fill="#666"/><rect x="3" y="119.21" width="1" height="1" fill="#888"/><rect x="3" y="127.47" width="1" height="1" fill="#888"/><rect x="2" y="131.60" width="2.5" height="1" fill="#666"/><rect x="3" y="135.74" width="1" height="1" fill="#888"/><rect x="3" y="144.00" width="1" height="1" fill="#888"/><rect x="2" y="148.13" width="2.5" height="1" fill="#666"/><rect x="3" y="152.27" width="1" height="1" fill="#888"/><rect x="3" y="160.53" width="1" height="1" fill="#888"/><rect x="2" y="164.66" width="2.5" height="1" fill="#666"/><rect x="3" y="168.80" width="1" height="1" fill="#888"/><rect x="3" y="177.06" width="1" height="1" fill="#888"/><rect x="2" y="181.19" width="2.5" height="1" fill="#666"/><rect x="3" y="185.33" width="1" height="1" fill="#888"/><rect x="3" y="193.59" width="1" height="1" fill="#888"/><rect x="2" y="197.72" width="2.5" height="1" fill="#666"/><rect x="3" y="201.86" width="1" height="1" fill="#888"/><rect x="3" y="210.12" width="1" height="1" fill="#888"/><rect x="2" y="214.25" width="2.5" height="1" fill="#666"/><rect x="3" y="218.39" width="1" height="1" fill="#888"/><rect x="3" y="226.65" width="1" height="1" fill="#888"/><rect x="2" y="230.78" width="2.5" height="1" fill="#666"/><rect x="3" y="234.92" width="1" height="1" fill="#888"/><rect x="3" y="243.18" width="1" height="1" fill="#888"/><rect x="2" y="247.31" width="2.5" height="1" fill="#666"/><rect x="3" y="251.45" width="1" height="1" fill="#888"/><rect x="3" y="259.71" width="1" height="1" fill="#888"/><rect x="2" y="263.84" width="2.5" height="1" fill="#666"/><rect x="3" y="267.98" width="1" height="1" fill="#888"/><rect x="3" y="276.24" width="1" height="1" fill="#888"/><rect x="2" y="280.38" width="2.5" height="1" fill="#666"/><rect x="3" y="284.51" width="1" height="1" fill="#888"/><rect x="3" y="292.77" width="1" height="1" fill="#888"/><rect x="2" y="296.90" width="2.5" height="1" fill="#666"/><rect x="3" y="301.04" width="1" height="1" fill="#888"/><rect x="3" y="309.30" width="1" height="1" fill="#888"/><rect x="2" y="313.44" width="2.5" height="1" fill="#666"/></svg>
<!-- SLIDE -->
<div class="a" style="left:169px;top:115px;width:562px;height:316px;background:#dddddd"></div>
<div class="a" style="left:170px;top:116px;width:560px;height:314px;background:#fff;overflow:hidden">
  <svg class="a" style="left:0;top:0" width="560" height="315" viewBox="0 0 560 315" id="swirl"><g fill="none" stroke="#d2d2d2" stroke-width="0.9"><path d="M78.4 -16.0 A323.0 323.0 0 0 0 14.3 329.0"/><path d="M88.1 -16.0 A316.0 316.0 0 0 0 21.9 329.0"/><path d="M101.0 -16.0 A307.0 307.0 0 0 0 31.7 329.0"/><path d="M169.8 -16.0 A315.3 315.3 0 0 0 53.7 329.0" stroke-dasharray="3 2"/><path d="M177.7 -16.0 A303.2 303.2 0 0 0 64.4 329.0" stroke-dasharray="3 2"/><path d="M216.8 -16.0 A275.0 275.0 0 0 0 92.8 329.0"/><path d="M228.1 -16.0 A262.4 262.4 0 0 0 105.3 329.0"/><path d="M238.9 -16.0 A250.3 250.3 0 0 0 117.8 329.0"/><path d="M244.9 -16.0 A240.6 240.6 0 0 0 128.4 329.0"/><path d="M259.9 -16.0 A228.0 228.0 0 0 0 143.3 329.0" stroke-dasharray="3 2"/><path d="M289.3 -16.0 A213.5 213.5 0 0 0 162.1 329.0"/><path d="M473.0 -3.0 Q522.5 10.5 570.0 29.0"/><path d="M500.7 -3.0 Q536.4 6.8 570.0 21.6" stroke-dasharray="3 2"/><path d="M513.6 -3.0 Q542.8 3.8 570.0 15.7"/><path d="M462.8 323.0 Q519.4 276.4 568.0 220.7"/><path d="M473.8 323.0 Q524.9 283.0 568.0 234.0" stroke-dasharray="3 2"/><path d="M481.0 323.0 Q528.5 285.5 568.0 239.0"/><path d="M489.7 323.0 Q532.9 289.1 568.0 246.3"/><path d="M498.2 323.0 Q537.1 292.2 568.0 252.5"/><path d="M511.7 323.0 Q543.9 300.1 568.0 268.3"/></g></svg>
  <div class="a" style="left:36px;top:77.5px;width:169px;height:23px;background:#f71c00"></div>
  <div class="a" style="left:36px;top:104px;width:169px;height:121px;background:#f71c00"></div>
  <svg class="a" style="left:0;top:0" width="560" height="315"><rect x="39.5" y="107.5" width="163" height="114" fill="none" stroke="#f8a898" stroke-width="1" stroke-dasharray="1 1"/></svg>
  <div class="a" style="left:113.5px;top:225px;width:0;height:0;border-left:7px solid transparent;border-right:7px solid transparent;border-top:11.5px solid #f71c00"></div>
  <div class="a" style="left:52.6px;top:149.6px;font-size:23px;line-height:26px;color:#ffffff;-webkit-text-stroke:0.6px #f71c00;transform-origin:0 0;transform:scaleX(0.845)">Click to add title</div>
  <svg class="a" style="left:0;top:0" width="560" height="315"><rect x="234.5" y="36.5" width="290" height="242" fill="none" stroke="#b0b0b0" stroke-width="1" stroke-dasharray="1 1"/></svg>
  <div class="a" style="left:240px;top:155px;width:3.5px;height:3.5px;background:#f71c00"></div>
  <div class="a" style="left:249.5px;top:152px;font-family:'Liberation Serif',serif;font-weight:bold;font-size:10.5px;line-height:12px;color:#222">Click</div>
  <div class="a" style="left:266px;top:89px;width:223px;height:169px;background:#fff"></div>
  <svg class="a" style="left:0;top:0" width="560" height="314"><rect x="266.5" y="89.5" width="222.5" height="169" fill="none" stroke="#8c8c8c" stroke-width="1"/></svg>
</div>

<!-- HANDLES -->
<svg class="a" style="left:0;top:0" width="768" height="454" viewBox="0 0 768 454">
  <g fill="#fff" stroke="#8c8c8c" stroke-width="1">
    <circle cx="436.5" cy="205.5" r="3"/><circle cx="547.5" cy="205.5" r="3"/><circle cx="659" cy="205.5" r="3"/>
    <circle cx="436.5" cy="290" r="3"/><circle cx="659" cy="290" r="3"/>
    <circle cx="436.5" cy="374.5" r="3"/><circle cx="547.5" cy="374.5" r="3"/><circle cx="659" cy="374.5" r="3"/>
  </g>
</svg>
<!-- CONTEXT MENU -->
<div class="a" style="left:483px;top:237.5px;width:92px;height:192px;background:#fff;border:1px solid #c6c6c6;box-shadow:1px 1px 2px rgba(0,0,0,0.15)">
</div>
<div class="a" style="left:497.5px;top:267px;width:76px;height:12.5px;background:#e3e3e3"></div>
<div class="a rb" style="left:502.6px;top:242.0px;color:#444">Cu<u>t</u></div>
<div class="a rb" style="left:502.6px;top:256.6px;color:#444"><u>C</u>opy</div>
<div class="a rb" style="left:502.6px;top:269.8px;color:#444"><b style="font-weight:bold;color:#555">Paste Options:</b></div>
<div class="a rb" style="left:502.6px;top:302.1px;color:#444"><u>S</u>ave as Picture...</div>
<div class="a rb" style="left:502.6px;top:317.0px;color:#444">Property Sheet</div>
<div class="a rb" style="left:502.6px;top:330.8px;color:#444"><u>V</u>iew Code</div>
<div class="a rb" style="left:502.6px;top:345.8px;color:#444">TextBox <u>O</u>bject</div>
<div class="a rb" style="left:502.6px;top:361.2px;color:#b4b4b4"><u>G</u>roup</div>
<div class="a rb" style="left:502.6px;top:375.3px;color:#444">Bring to F<u>r</u>ont</div>
<div class="a rb" style="left:502.6px;top:389.0px;color:#444">Send to Bac<u>k</u></div>
<div class="a rb" style="left:502.6px;top:404.3px;color:#b4b4b4">Action</div>
<div class="a rb" style="left:502.6px;top:418.4px;color:#444">Si<u>z</u>e and Position...</div>
<div class="a" style="left:502px;top:297px;width:71px;height:1px;background:#e1e1e1"></div>
<div class="a" style="left:502px;top:312px;width:71px;height:1px;background:#e1e1e1"></div>
<div class="a" style="left:502px;top:341px;width:71px;height:1px;background:#e1e1e1"></div>
<div class="a" style="left:502px;top:356px;width:71px;height:1px;background:#e1e1e1"></div>
<div class="a" style="left:502px;top:400px;width:71px;height:1px;background:#e1e1e1"></div>
<svg class="a" style="left:565.5px;top:346.5px" width="3" height="5" viewBox="0 0 3 5"><path d="M0 0l3 2.5L0 5z" fill="#444"/></svg>
<svg class="a" style="left:565.5px;top:361.9px" width="3" height="5" viewBox="0 0 3 5"><path d="M0 0l3 2.5L0 5z" fill="#c8c8c8"/></svg>
<svg class="a" style="left:565.5px;top:376.0px" width="3" height="5" viewBox="0 0 3 5"><path d="M0 0l3 2.5L0 5z" fill="#444"/></svg>
<svg class="a" style="left:565.5px;top:389.7px" width="3" height="5" viewBox="0 0 3 5"><path d="M0 0l3 2.5L0 5z" fill="#444"/></svg>
<div class="a" style="left:560px;top:374.0px;width:1px;height:9px;background:#e1e1e1"></div>
<div class="a" style="left:560px;top:387.7px;width:1px;height:9px;background:#e1e1e1"></div>
<svg class="a" style="left:486px;top:240px" width="11" height="11" viewBox="0 0 11 11">
  <path d="M2.5 0.5l4 6.5M7.5 0.5l-4 6.5" stroke="#555" stroke-width="0.9"/>
  <circle cx="3" cy="8.5" r="1.7" fill="none" stroke="#2a72c8" stroke-width="0.9"/><circle cx="7.5" cy="8.5" r="1.7" fill="none" stroke="#2a72c8" stroke-width="0.9"/>
</svg>
<svg class="a" style="left:486px;top:254px" width="11" height="11" viewBox="0 0 11 11">
  <path d="M0.5 0.5h4.5l1.5 1.5v6h-6z" fill="#fff" stroke="#777" stroke-width="0.8"/>
  <path d="M3.5 3.5h4.5l2 2v5h-6.5z" fill="#fff" stroke="#777" stroke-width="0.8"/>
  <path d="M5 6.5h3.5M5 8.3h3.5" stroke="#2a72c8" stroke-width="0.7"/>
  <path d="M1.5 2.5h2M1.5 4h2" stroke="#2a72c8" stroke-width="0.6"/>
</svg>
<svg class="a" style="left:486px;top:267px" width="11" height="12" viewBox="0 0 11 12">
  <rect x="0.5" y="2" width="7" height="9" fill="#e9b766"/>
  <rect x="2.5" y="0.5" width="3" height="2.5" fill="#fff" stroke="#777" stroke-width="0.7"/>
  <path d="M4.5 5.5h4l2 2v4h-6z" fill="#fff" stroke="#555" stroke-width="0.8"/>
</svg>
<svg class="a" style="left:501.5px;top:282.5px" width="13" height="13" viewBox="0 0 13 13">
  <path d="M1 2.5v9.5h5" fill="none" stroke="#e9b766" stroke-width="1.6"/>
  <path d="M1 2.5h8v3" fill="none" stroke="#888" stroke-width="0.7"/>
  <rect x="3" y="0.8" width="4" height="2.4" fill="#fff" stroke="#666" stroke-width="0.7"/>
  <text x="5.5" y="12.5" font-family="Liberation Sans" font-size="8.5" fill="#333">A</text>
</svg>
<svg class="a" style="left:486px;top:315px" width="11" height="11" viewBox="0 0 11 11">
  <rect x="1" y="0.5" width="8.5" height="9.5" fill="#fff" stroke="#777" stroke-width="0.8"/>
  <rect x="1" y="0.5" width="8.5" height="1.6" fill="#2a72c8"/>
  <path d="M3 4v5M3 5h1.2M3 7.5h1.2M5 5h3M5 7.5h3" stroke="#666" stroke-width="0.7"/>
</svg>
<svg class="a" style="left:485.5px;top:329px" width="11" height="11" viewBox="0 0 11 11">
  <rect x="2.5" y="0.5" width="8" height="8.5" fill="#fff" stroke="#777" stroke-width="0.8"/>
  <rect x="2.5" y="0.5" width="8" height="1.5" fill="#666"/>
  <circle cx="3.8" cy="6.3" r="2.2" fill="#fff" stroke="#555" stroke-width="0.9"/>
  <path d="M5.2 7.8l2 2" stroke="#555" stroke-width="1"/>
  <path d="M8 4.5h1.5M8 6.5h1.5" stroke="#777" stroke-width="0.7"/>
</svg>
<svg class="a" style="left:486px;top:359px" width="11" height="11" viewBox="0 0 11 11">
  <rect x="0.5" y="0.5" width="10" height="10" fill="none" stroke="#c8c8c8" stroke-width="0.8" stroke-dasharray="1.2 1"/>
  <rect x="2.5" y="2.5" width="4" height="4" fill="none" stroke="#bbb" stroke-width="0.7"/>
  <rect x="4.5" y="4.5" width="4" height="4" fill="none" stroke="#bbb" stroke-width="0.7"/>
</svg>
<svg class="a" style="left:486px;top:373px" width="11" height="11" viewBox="0 0 11 11">
  <rect x="0.5" y="0.5" width="3.5" height="3.5" fill="#fff" stroke="#666" stroke-width="0.7"/>
  <rect x="2.5" y="2.5" width="6" height="5.5" fill="#e9b766"/>
  <path d="M7 8.5v2h3v-3h-1.5" fill="none" stroke="#666" stroke-width="0.7"/>
</svg>
<svg class="a" style="left:486px;top:387px" width="11" height="11" viewBox="0 0 11 11">
  <rect x="0.5" y="0.5" width="3.5" height="3.5" fill="#fff" stroke="#666" stroke-width="0.7"/>
  <rect x="3.5" y="4" width="4.5" height="4" fill="#e9b766"/>
  <rect x="6.5" y="6.5" width="3.5" height="3.5" fill="#fff" stroke="#666" stroke-width="0.7"/>
</svg>
<svg class="a" style="left:486px;top:402px" width="11" height="11" viewBox="0 0 11 11">
  <rect x="0.5" y="0.5" width="10" height="10" fill="none" stroke="#ccc" stroke-width="0.7"/>
  <path d="M5.5 2.2l1 2.2 2.3 0.2-1.8 1.5 0.6 2.3-2.1-1.3-2.1 1.3 0.6-2.3-1.8-1.5 2.3-0.2z" fill="#bbb"/>
</svg>
<svg class="a" style="left:486px;top:415.5px" width="11" height="12" viewBox="0 0 11 12">
  <rect x="6" y="0.5" width="3.5" height="11" fill="#fff" stroke="#666" stroke-width="0.8"/>
  <path d="M2.5 1v10" stroke="#666" stroke-width="0.6" stroke-dasharray="1 1"/>
  <path d="M1 3l1.5-2 1.5 2zM1 9l1.5 2 1.5-2z" fill="#2a72c8"/>
</svg>

<!-- SCROLLBAR -->
<div class="a" style="left:758px;top:94px;width:10px;height:346px;background:#e6e6e6"></div>
<div class="a" style="left:758px;top:102px;width:10px;height:297px;background:#dcdcdc"></div>
<div class="a" style="left:758.5px;top:93.5px;width:9.5px;height:8px;background:#fff;border:1px solid #d8d8d8"></div>
<svg class="a" style="left:760px;top:96px" width="6" height="4" viewBox="0 0 6 4"><path d="M0.5 3.2h5L3 0.8z" fill="#555"/></svg>
<div class="a" style="left:758px;top:175px;width:10px;height:74px;background:#fff;border:1px solid #c8c8c8"></div>
<div class="a" style="left:758.5px;top:398.5px;width:9.5px;height:8.5px;background:#fff;border:1px solid #d8d8d8"></div>
<svg class="a" style="left:761px;top:401.5px" width="5" height="3" viewBox="0 0 5 3"><path d="M0 0h5L2.5 2.8z" fill="#555"/></svg>
<svg class="a" style="left:760.5px;top:409.5px" width="6" height="16" viewBox="0 0 6 16">
  <path d="M0.5 3.6L3 1l2.5 2.6z" fill="#666"/><rect x="0.5" y="4.3" width="5" height="1.2" fill="#666"/>
  <rect x="0.5" y="11" width="5" height="1.2" fill="#666"/><path d="M0.5 12.6L3 15.2l2.5-2.6z" fill="#666"/>
</svg>
<!-- STATUS BAR -->
<div class="a" style="left:0;top:440px;width:768px;height:14px;background:#f1f1f1;border-top:1px solid #d6d6d6"></div>
<div class="a rb" style="left:4px;top:444.7px;color:#444">Slide 2 of 4</div>
<svg class="a" style="left:48px;top:443px" width="9" height="9" viewBox="0 0 9 9"><path d="M0.5 0.5h3.5v8h-3.5zM4 0.5h4.5v8h-4.5" fill="none" stroke="#777" stroke-width="0.8"/><path d="M5 4l1 1 2-2.5" stroke="#777" stroke-width="0.8" fill="none"/></svg>
<div class="a rb" style="left:65.3px;top:444.7px;color:#444">English (Philippines)</div>
<svg class="a" style="left:522px;top:443px" width="9" height="9" viewBox="0 0 9 9"><path d="M2 3.5L4.5 1 7 3.5M1 5h7M1 6.7h7M1 8.4h7" stroke="#666" stroke-width="0.8" fill="none"/></svg>
<div class="a rb" style="left:532.5px;top:444.7px;color:#444;font-size:7px">Notes</div>
<div class="a" style="left:561.5px;top:441.5px;width:21.5px;height:12.5px;background:#d4d4d4"></div>
<svg class="a" style="left:567.5px;top:443.5px" width="10" height="9" viewBox="0 0 10 9"><rect x="0.5" y="0.5" width="8.5" height="7.5" fill="none" stroke="#666" stroke-width="0.9"/><rect x="2.5" y="2.2" width="4.5" height="3.5" fill="none" stroke="#777" stroke-width="0.6"/></svg>
<svg class="a" style="left:589.5px;top:443px" width="10" height="9" viewBox="0 0 10 9"><rect x="0.5" y="0.5" width="3.5" height="3" fill="none" stroke="#777" stroke-width="0.8"/><rect x="5.5" y="0.5" width="3.5" height="3" fill="none" stroke="#777" stroke-width="0.8"/><rect x="0.5" y="5" width="3.5" height="3" fill="none" stroke="#777" stroke-width="0.8"/><rect x="5.5" y="5" width="3.5" height="3" fill="none" stroke="#777" stroke-width="0.8"/></svg>
<svg class="a" style="left:611.5px;top:443px" width="10" height="9" viewBox="0 0 10 9"><path d="M0.5 1q2-1 4.5 0.5q2.5-1.5 4.5-0.5v7q-2-1-4.5 0.5q-2.5-1.5-4.5-0.5z" fill="#ccc" stroke="#777" stroke-width="0.8"/><path d="M5 1.5v7" stroke="#777" stroke-width="0.7"/></svg>
<svg class="a" style="left:634px;top:443px" width="9" height="9" viewBox="0 0 9 9"><path d="M0.5 0.8h8M1.5 0.8v4.2h6v-4.2M4.5 5v3M2.5 8.5h4" stroke="#666" stroke-width="0.8" fill="none"/></svg>
<div class="a" style="left:653px;top:447.5px;width:3.5px;height:1px;background:#555"></div>
<div class="a" style="left:659px;top:448px;width:58px;height:1px;background:#a8a8a8"></div>
<div class="a" style="left:688px;top:446.5px;width:1px;height:3px;background:#a8a8a8"></div>
<div class="a" style="left:679px;top:445px;width:2.5px;height:6px;background:#666"></div>
<svg class="a" style="left:719px;top:445px" width="5" height="5" viewBox="0 0 5 5"><path d="M0 2.5h5M2.5 0v5" stroke="#555" stroke-width="1"/></svg>
<div class="a rb" style="left:729.8px;top:444.7px;color:#444">76%</div>
<svg class="a" style="left:749.5px;top:443.5px" width="9" height="9" viewBox="0 0 9 9"><rect x="0.5" y="0.5" width="8" height="8" fill="none" stroke="#777" stroke-width="0.8"/><path d="M2 2l1.5 1.5M7 2L5.5 3.5M2 7l1.5-1.5M7 7L5.5 5.5" stroke="#777" stroke-width="0.8"/><path d="M1.5 1.5h2v0.8h-2zM1.5 1.5v2" stroke="#777" stroke-width="0.5"/></svg>
</body></html>
